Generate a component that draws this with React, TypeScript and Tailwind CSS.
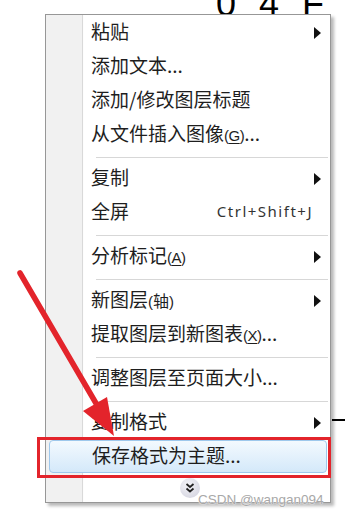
import React from 'react';

type Item =
  | { kind: 'sep' }
  | {
      kind: 'item';
      label: string;
      hotkey?: string;
      paren?: string;
      dots?: boolean;
      sub?: boolean;
      shortcut?: string;
      active?: boolean;
    };

const items: Item[] = [
  { kind: 'item', label: '粘贴', sub: true },
  { kind: 'item', label: '添加文本...' },
  { kind: 'item', label: '添加/修改图层标题' },
  { kind: 'item', label: '从文件插入图像', hotkey: 'G', dots: true },
  { kind: 'sep' },
  { kind: 'item', label: '复制', sub: true },
  { kind: 'item', label: '全屏', shortcut: 'Ctrl+Shift+J' },
  { kind: 'sep' },
  { kind: 'item', label: '分析标记', hotkey: 'A', sub: true },
  { kind: 'sep' },
  { kind: 'item', label: '新图层', paren: '轴', sub: true },
  { kind: 'item', label: '提取图层到新图表', hotkey: 'X', dots: true },
  { kind: 'sep' },
  { kind: 'item', label: '调整图层至页面大小...' },
  { kind: 'sep' },
  { kind: 'item', label: '复制格式', sub: true },
  { kind: 'item', label: '保存格式为主题...', active: true },
];

const SubArrow = () => (
  <svg width="8" height="12" viewBox="0 0 8 12" className="shrink-0">
    <path d="M0 0 L7 6 L0 12 Z" fill="#111" />
  </svg>
);

const MenuRow = ({ item }: { item: Extract<Item, { kind: 'item' }> }) => {
  const text = (
    <span className="mb-[5px] text-[19px] leading-none text-[#1e1e1e] whitespace-nowrap">
      {item.label}
      {item.hotkey && (
        <span className="text-[15px] tracking-[-0.5px] font-['Liberation_Sans',sans-serif]">
          (<span className="underline underline-offset-2">{item.hotkey}</span>)
        </span>
      )}
      {item.paren && (
        <span>
          <span className="text-[15px] font-['Liberation_Sans',sans-serif]">(</span>
          <span className="text-[16px]">{item.paren}</span>
          <span className="text-[15px] font-['Liberation_Sans',sans-serif]">)</span>
        </span>
      )}
      {item.dots && '...'}
    </span>
  );

  if (item.active) {
    return (
      <div className="h-[34px] pl-[3px] pr-[3px]">
        <div className="h-[33px] flex items-center pl-[42px] pr-[5px] rounded-[4px] border border-[#9ec8ec] bg-[linear-gradient(to_bottom,#f3f9fe,#d4e9fa)]">
          {text}
        </div>
      </div>
    );
  }

  return (
    <div className="h-[34px] flex items-center pl-[45px] pr-[8px]">
      {text}
      <div className="flex-1" />
      {item.shortcut && (
        <span className="mb-[3px] mr-[9px] text-[15px] tracking-[1.5px] text-[#333] font-['Noto_Sans',sans-serif]">
          {item.shortcut}
        </span>
      )}
      {item.sub && <SubArrow />}
    </div>
  );
};

export default function App() {
  return (
    <div className="relative w-[345px] h-[516px] overflow-hidden bg-white font-['Noto_Sans_CJK_SC','Noto_Sans',sans-serif]">
      {/* clipped chart labels at the top */}
      <div className="h-[14px] overflow-hidden flex items-end gap-[23px] pl-[216px] text-[36px] leading-none text-black font-['Liberation_Sans',sans-serif]">
        <span className="translate-y-[8px]">0</span>
        <span className="translate-y-[8px]">4</span>
        <span className="translate-y-[8px]">F</span>
      </div>

      {/* context menu */}
      <div className="ml-[45px] w-[286px] border border-[#979797] pt-[1px] shadow-[3px_3px_3px_rgba(0,0,0,0.28)] bg-[linear-gradient(to_right,#f1f1f1_36px,#d9d9d9_36px,#d9d9d9_37px,#fdfdfd_37px,#fdfdfd_38px,#ffffff_38px)]">
        {items.map((it, i) =>
          it.kind === 'sep' ? (
            <div key={i} className="h-[10px] flex items-center pl-[50px] pr-[2px]">
              <div className="h-[1px] w-full bg-[#d7d7d7]" />
            </div>
          ) : (
            <MenuRow key={i} item={it} />
          )
        )}
        <div className="h-[28px] flex items-center justify-center pl-[3px]">
          <div className="w-[20px] h-[20px] rounded-full bg-[radial-gradient(circle_at_40%_35%,#f4f4f8,#cfcfdc)] flex items-center justify-center">
            <svg width="10" height="10" viewBox="0 0 10 10">
              <path d="M1.5 1 L5 4 L8.5 1 M1.5 5.5 L5 8.5 L8.5 5.5" stroke="#222" strokeWidth="1.8" fill="none" />
            </svg>
          </div>
        </div>
      </div>

      {/* axis tick next to the menu */}
      <div className="absolute left-[332px] top-[419px] w-[13px] h-[2px] bg-black" />

      {/* red highlight box */}
      <div className="absolute left-[37px] top-[437px] w-[294px] h-[41px] border-[3px] border-[#e3242b]" />

      {/* red arrow */}
      <svg className="absolute left-0 top-0" width="345" height="516" viewBox="0 0 345 516">
        <line x1="20" y1="273" x2="97" y2="405" stroke="#e3242b" strokeWidth="5.5" strokeLinecap="round" />
        <path d="M114 436 L83 411 L107 397 Z" fill="#e3242b" />
      </svg>

      {/* watermark */}
      <div className="absolute left-[198px] top-[493px] text-[13.5px] leading-none text-[#a8a8a8] font-['Liberation_Sans',sans-serif] [text-shadow:0_0_2px_#fff,0_0_1px_#fff]">
        CSDN @wangan094
      </div>
    </div>
  );
}
